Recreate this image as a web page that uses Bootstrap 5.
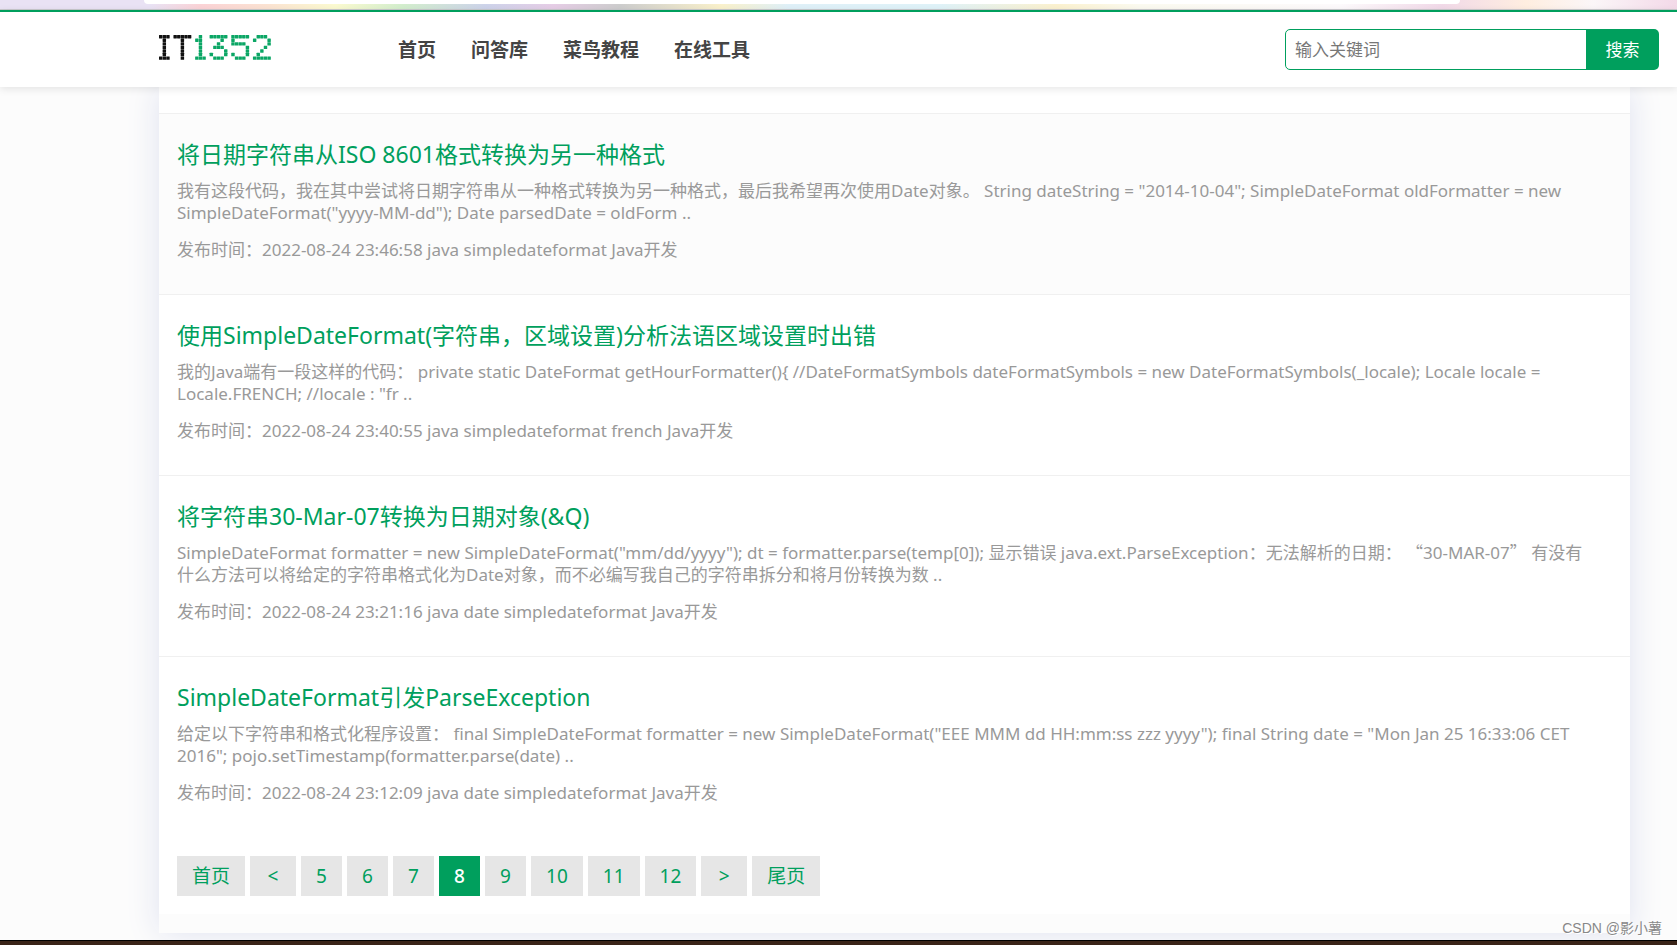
<!DOCTYPE html>
<html lang="zh-CN">
<head>
<meta charset="utf-8">
<meta name="viewport" content="width=device-width, initial-scale=1">
<title>IT1352</title>
<link href="https://cdn.jsdelivr.net/npm/bootstrap@5.3.0/dist/css/bootstrap.min.css" rel="stylesheet">
<style>
:root { --brand: #009f5d; }
body { background: #fcfcfc; font-family: "Noto Sans", "Noto Sans CJK SC", sans-serif; font-size: 17px; line-height: 22px; color: #999; }
a { color: var(--brand); text-decoration: none; }
.chrome-strip { height: 10px; padding: 0 217px 0 144px; border-bottom: 1px solid #c8c8cc;
  background: linear-gradient(90deg, #e9e2f4 0 9%, #fbd3d6 12%, #fbe3d2 16%, #fbfad0 20%, #d3eecd 24%, #cdd3ea 29%, #e6cde6 33%, #cdcdcd 37%, #faf1cb 43%, #dff0f8 47%, #dff2f8 56%, #fbf1cf 63%, #fbfaf0 68%, #fdfafc 80%, #f1d9e8 86%, #ffeee0 91%, #fbf6f8 95%, #f3d9e8 100%); }
.address-pill { height: 4px; background: #fff; border-radius: 0 0 12px 12px; }
.site-header { border-top: 2px solid var(--brand); background: #fff; box-shadow: 0 2px 8px rgba(0,0,0,.1); padding: 17px 18px 17px 159px; z-index: 2; }
.logo { width: 112px; height: 25px; display: block; margin-bottom: 4px; }
.site-nav { gap: 35px; margin-left: 127px; }
.site-nav a { color: #444; font-size: 19px; font-weight: 700; line-height: 26px; }
.search { width: 374px; height: 41px; }
.search .form-control { border-color: var(--brand); border-radius: 5px 0 0 5px; padding: 0 9px; font-size: 17px; color: #555; }
.search .form-control::placeholder { color: #777; }
.search .btn { width: 73px; background: var(--brand); color: #fff; border-radius: 0 5px 5px 0; font-size: 17px; padding: 0; }
.panel { margin: 0 47px 7px 159px; background: #fff; box-shadow: 0 0 32px #dfe2f0; padding-top: 26px; }
.post { border-top: 1px solid #f0f0f0; padding: 25px 40px 33px 18px; }
.post.hovered { background: #fcfcfc; }
.post h2 { font-size: 23px; line-height: 30px; margin: 0 0 11px; font-weight: 400; }
.post p { margin: 0 0 15px; }
.cjk { display: inline-block; line-height: 17px; font-family: "Noto Sans CJK SC", sans-serif; }
.pager { gap: 5px; padding: 19px 18px 18px; }
.pager .page-link { min-width: 41px; height: 40px; padding: 0 15px; line-height: 40px; border: 0; border-radius: 0; background: #e6e6e6; color: var(--brand); font-size: 19px; text-align: center; }
.pager .step .page-link { min-width: 46px; }
.pager .active .page-link { background: var(--brand); color: #fff; font-weight: 500; }
.panel-foot { height: 19px; background: #fcfcfc; }
.taskbar { height: 5px; background: #3a2418; border-top: 1px solid #000; position: relative; }
.watermark { position: absolute; right: 15px; bottom: 6px; color: #888; font-family: "Liberation Sans", "Noto Sans CJK SC", sans-serif; font-size: 14px; text-shadow: 1px 1px #fff; z-index: 3; }
</style>
</head>
<body>
<div class="position-relative">
<div class="chrome-strip"><div class="address-pill"></div></div>
<header class="site-header position-relative d-flex align-items-center">
  <a href="#" aria-label="IT1352"><svg class="logo" viewBox="0 0 31 7" preserveAspectRatio="none" id="logo"></svg></a>
  <nav class="site-nav d-flex">
    <a href="#">首页</a><a href="#">问答库</a><a href="#">菜鸟教程</a><a href="#">在线工具</a>
  </nav>
  <form class="search input-group flex-nowrap ms-auto">
    <input type="text" class="form-control" placeholder="输入关键词" aria-label="输入关键词">
    <button type="button" class="btn">搜索</button>
  </form>
</header>
<main class="panel">
  <article class="post hovered">
    <h2><a href="#">将日期字符串从ISO 8601格式转换为另一种格式</a></h2>
    <p>我有这段代码，我在其中尝试将日期字符串从一种格式转换为另一种格式，最后我希望再次使用Date对象。 String dateString = "2014-10-04"; SimpleDateFormat oldFormatter = new SimpleDateFormat("yyyy-MM-dd"); Date parsedDate = oldForm ..</p>
    <div>发布时间：2022-08-24 23:46:58 java simpledateformat Java开发</div>
  </article>
  <article class="post">
    <h2><a href="#">使用SimpleDateFormat(字符串，区域设置)分析法语区域设置时出错</a></h2>
    <p>我的Java端有一段这样的代码： private static DateFormat getHourFormatter(){ //DateFormatSymbols dateFormatSymbols = new DateFormatSymbols(_locale); Locale locale = Locale.FRENCH; //locale : "fr ..</p>
    <div>发布时间：2022-08-24 23:40:55 java simpledateformat french Java开发</div>
  </article>
  <article class="post">
    <h2><a href="#">将字符串30-Mar-07转换为日期对象(&amp;Q)</a></h2>
    <p>SimpleDateFormat formatter = new SimpleDateFormat("mm/dd/yyyy"); dt = formatter.parse(temp[0]); 显示错误 java.ext.ParseException：无法解析的日期： <span class="cjk">“</span>30-MAR-07<span class="cjk">”</span> 有没有什么方法可以将给定的字符串格式化为Date对象，而不必编写我自己的字符串拆分和将月份转换为数 ..</p>
    <div>发布时间：2022-08-24 23:21:16 java date simpledateformat Java开发</div>
  </article>
  <article class="post">
    <h2><a href="#">SimpleDateFormat引发ParseException</a></h2>
    <p>给定以下字符串和格式化程序设置： final SimpleDateFormat formatter = new SimpleDateFormat("EEE MMM dd HH:mm:ss zzz yyyy"); final String date = "Mon Jan 25 16:33:06 CET 2016"; pojo.setTimestamp(formatter.parse(date) ..</p>
    <div>发布时间：2022-08-24 23:12:09 java date simpledateformat Java开发</div>
  </article>
  <ul class="pager pagination m-0">
    <li><a class="page-link" href="#">首页</a></li>
    <li class="step"><a class="page-link" href="#">&lt;</a></li>
    <li><a class="page-link" href="#">5</a></li>
    <li><a class="page-link" href="#">6</a></li>
    <li><a class="page-link" href="#">7</a></li>
    <li class="active"><a class="page-link" href="#">8</a></li>
    <li><a class="page-link" href="#">9</a></li>
    <li><a class="page-link" href="#">10</a></li>
    <li><a class="page-link" href="#">11</a></li>
    <li><a class="page-link" href="#">12</a></li>
    <li class="step"><a class="page-link" href="#">&gt;</a></li>
    <li><a class="page-link" href="#">尾页</a></li>
  </ul>
  <div class="panel-foot"></div>
</main>
<div class="taskbar"></div>
<div class="watermark">CSDN @影小薯</div>
</div>
<script src="https://cdn.jsdelivr.net/npm/bootstrap@5.3.0/dist/js/bootstrap.bundle.min.js"></script>
<script>
// Dot-matrix logo, one character per dot
const rows = [
  "###.#####..#..#####.#####..###.",
  ".#....#...##.....#..#.....#...#",
  ".#....#....#....#...####......#",
  ".#....#....#...###......#....#.",
  ".#....#....#......#.....#...#..",
  ".#....#....#..#...#.#...#..#...",
  "###...#...###..###...###..#####"
];
document.getElementById("logo").innerHTML = rows.map((r, y) => [...r].map((c, x) =>
  c === "#" ? `<rect x="${x}" y="${y}" width=".95" height=".95" rx=".1" fill="${x < 9 ? "#111" : "#0ba665"}"/>` : "").join("")).join("");
</script>
</body>
</html>
